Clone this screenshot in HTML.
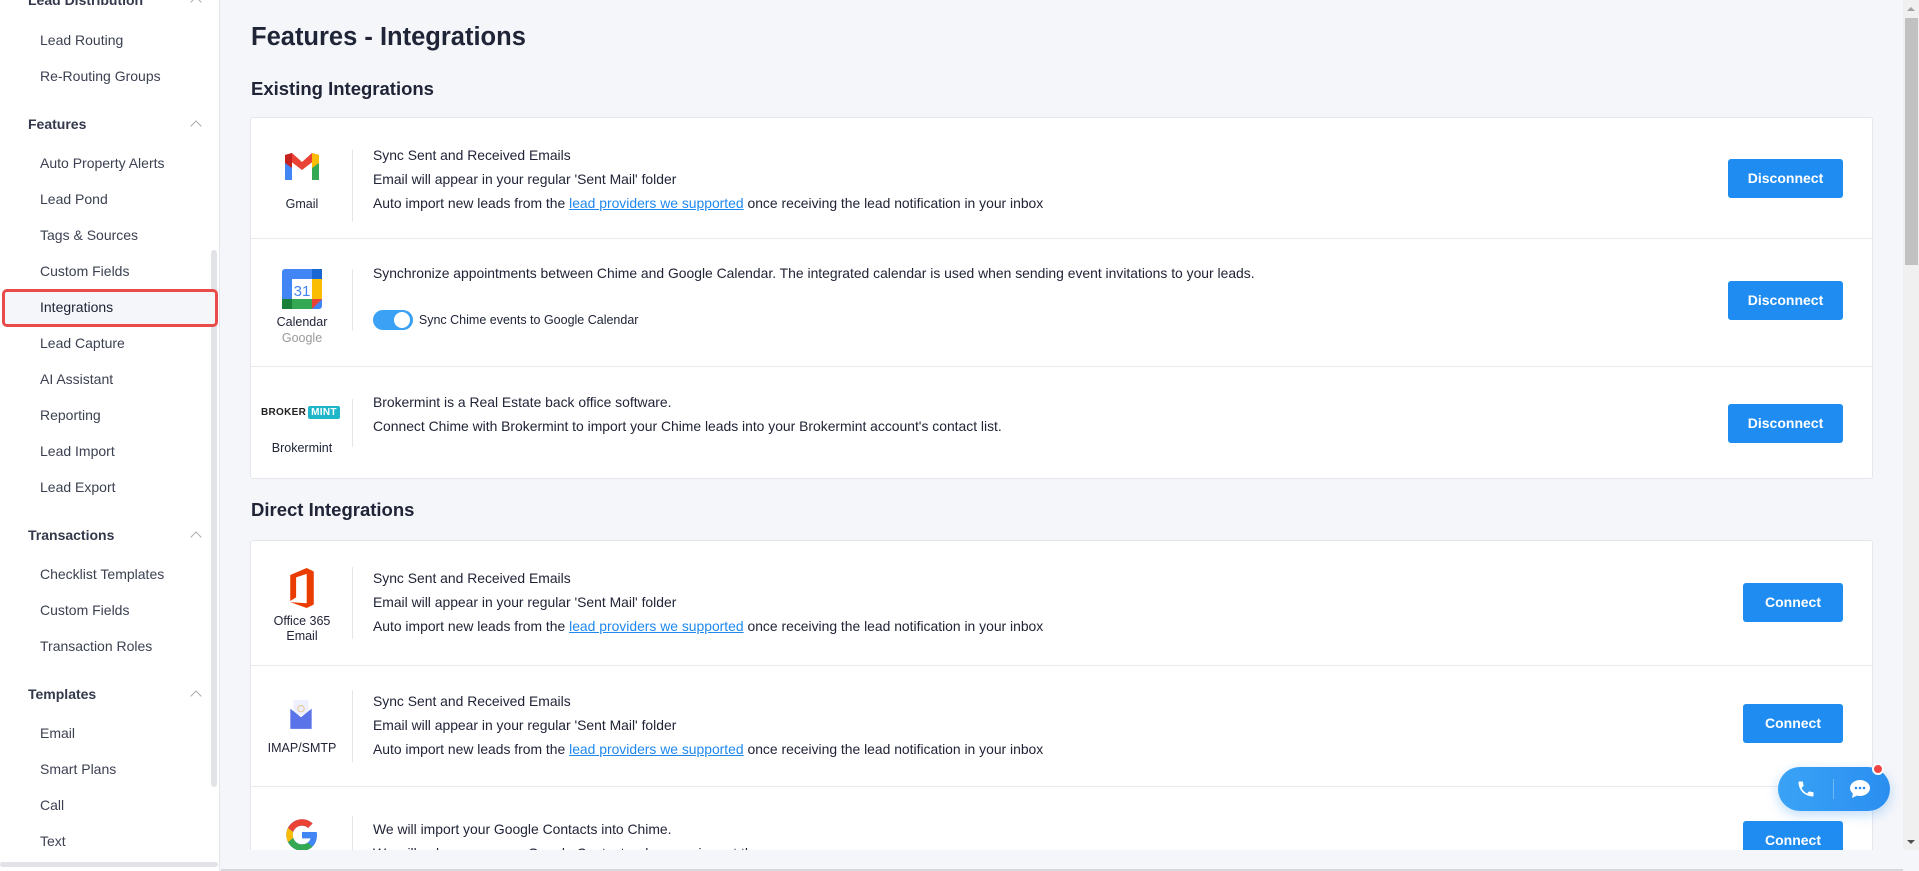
<!DOCTYPE html>
<html><head><meta charset="utf-8"><style>
*{margin:0;padding:0;box-sizing:border-box}
body{width:1919px;height:871px;overflow:hidden;background:#f5f6fa;font-family:"Liberation Sans",sans-serif;position:relative;color:#202437}
.sb{position:absolute;left:0;top:0;width:220px;height:871px;background:#fff;border-right:1px solid #e4e6ec}
.sb .h{position:absolute;left:28px;font-size:14px;font-weight:bold;color:#33384a}
.sb .h:after{content:"";position:absolute;left:164px;top:6px;width:7px;height:7px;border-left:1px solid #aaa;border-top:1px solid #aaa;transform:rotate(45deg)}
.sb .i{position:absolute;left:40px;font-size:14px;color:#3c4152;z-index:3}
.sel{position:absolute;left:2px;top:289px;width:216px;height:38px;border:3px solid #e94b4b;border-radius:5px;background:#f5f6fa;z-index:2}
.abs{position:absolute}
.title{left:251px;top:23px;font-size:25.5px;font-weight:bold}
.sec{left:251px;font-size:18.5px;font-weight:bold}
.card{position:absolute;left:250px;width:1623px;background:#fff;border:1px solid #e4e6ec;border-radius:3px;overflow:hidden}
.row{position:absolute;left:0;width:100%;border-bottom:1px solid #e8eaef}
.ic{position:absolute;left:0;width:102px;text-align:center;font-size:12.5px;color:#202437}
.dv{position:absolute;left:101px;width:1px;background:#e4e6ec}
.tx{position:absolute;left:122px;font-size:13.9px;color:#202437;line-height:24px}
.tx a{color:#1e88f0;text-decoration:underline}
.btn{position:absolute;background:#1f8cf2;color:#fff;font-size:14px;font-weight:bold;border-radius:3px;text-align:center;line-height:39px;height:39px}
</style></head><body>
<div class="sb">
<div class="h" style="top:-8px">Lead Distribution</div>
<div class="i" style="top:32px">Lead Routing</div>
<div class="i" style="top:68px">Re-Routing Groups</div>
<div class="h" style="top:116px">Features</div>
<div class="i" style="top:155px">Auto Property Alerts</div>
<div class="i" style="top:191px">Lead Pond</div>
<div class="i" style="top:227px">Tags &amp; Sources</div>
<div class="i" style="top:263px">Custom Fields</div>
<div class="sel"></div>
<div class="i" style="top:299px;color:#202437">Integrations</div>
<div class="i" style="top:335px">Lead Capture</div>
<div class="i" style="top:371px">AI Assistant</div>
<div class="i" style="top:407px">Reporting</div>
<div class="i" style="top:443px">Lead Import</div>
<div class="i" style="top:479px">Lead Export</div>
<div class="h" style="top:527px">Transactions</div>
<div class="i" style="top:566px">Checklist Templates</div>
<div class="i" style="top:602px">Custom Fields</div>
<div class="i" style="top:638px">Transaction Roles</div>
<div class="h" style="top:686px">Templates</div>
<div class="i" style="top:725px">Email</div>
<div class="i" style="top:761px">Smart Plans</div>
<div class="i" style="top:797px">Call</div>
<div class="i" style="top:833px">Text</div>
<div class="abs" style="left:211px;top:250px;width:6px;height:537px;background:#e2e3e6;border-radius:3px"></div>
<div class="abs" style="left:0;top:862px;width:218px;height:5px;background:#e2e3e6;border-radius:3px"></div>
</div>

<div class="abs title">Features - Integrations</div>
<div class="abs sec" style="top:78px">Existing Integrations</div>

<div class="card" style="top:117px;height:362px">
 <div class="row" style="top:0;height:121px">
  <svg class="abs" style="left:32px;top:35px" width="38" height="28" viewBox="0 0 38 28"><path d="M2 4 L2 27 L9 27 L9 11Z" fill="#4285f4"/><path d="M36 4 L36 27 L29 27 L29 11Z" fill="#34a853"/><path d="M2 4 L19 17 L36 4 L36 2 L29 0 L19 9 L9 0 L2 2Z" fill="#ea4335"/><path d="M29 0 L36 2 L36 10 L29 15Z" fill="#fbbc04"/><path d="M2 2 L9 0 L9 15 L2 10Z" fill="#c5221f"/></svg>
  <div class="ic" style="top:79px">Gmail</div>
  <div class="dv" style="top:32px;height:72px"></div>
  <div class="tx" style="top:25px">Sync Sent and Received Emails<br>Email will appear in your regular 'Sent Mail' folder<br>Auto import new leads from the <a>lead providers we supported</a> once receiving the lead notification in your inbox</div>
  <div class="btn" style="left:1477px;top:41px;width:115px">Disconnect</div>
 </div>
 <div class="row" style="top:121px;height:128px">
  <svg class="abs" style="left:31px;top:30px" width="40" height="40" viewBox="0 0 40 40"><rect x="0" y="0" width="40" height="40" rx="3" fill="#4285f4"/><rect x="30" y="10" width="10" height="20" fill="#fbbc04"/><rect x="0" y="30" width="10" height="10" fill="#188038"/><rect x="10" y="30" width="20" height="10" fill="#34a853"/><path d="M30 30 L40 30 L30 40Z" fill="#ea4335"/><rect x="30" y="0" width="10" height="10" fill="#1967d2"/><rect x="10" y="10" width="20" height="20" fill="#fff"/><text x="20" y="27" font-size="15" font-family="Liberation Sans" fill="#4285f4" text-anchor="middle">31</text></svg>
  <div class="ic" style="top:75px;line-height:16px">Calendar<br><span style="color:#999">Google</span></div>
  <div class="dv" style="top:30px;height:62px"></div>
  <div class="tx" style="top:22px">Synchronize appointments between Chime and Google Calendar. The integrated calendar is used when sending event invitations to your leads.</div>
  <div class="abs" style="left:122px;top:71px;width:40px;height:20px;border-radius:10px;background:#3ba1f5"><div class="abs" style="left:21px;top:2px;width:16px;height:16px;border-radius:50%;background:#fff"></div></div>
  <div class="tx" style="left:154px;top:69px;font-size:12.5px">&nbsp;&nbsp;&nbsp;&nbsp;Sync Chime events to Google Calendar</div>
  <div class="btn" style="left:1477px;top:42px;width:115px">Disconnect</div>
 </div>
 <div class="row" style="top:249px;height:113px;border:none">
  <div class="abs" style="left:10px;top:40px;font-size:10px;font-weight:bold;letter-spacing:.3px;color:#222">BROKER<span style="background:#1eb6c8;color:#fff;padding:1px 3px;border-radius:2px;margin-left:2px">MINT</span></div>
  <div class="ic" style="top:74px">Brokermint</div>
  <div class="dv" style="top:32px;height:48px"></div>
  <div class="tx" style="top:23px">Brokermint is a Real Estate back office software.<br>Connect Chime with Brokermint to import your Chime leads into your Brokermint account's contact list.</div>
  <div class="btn" style="left:1477px;top:37px;width:115px">Disconnect</div>
 </div>
</div>

<div class="abs sec" style="top:499px">Direct Integrations</div>

<div class="card" style="top:540px;height:320px;border-bottom:none">
 <div class="row" style="top:0;height:125px">
  <svg class="abs" style="left:36px;top:27px" width="30" height="40" viewBox="0 0 20 34"><path d="M0 6 L14 0 L20 3 L20 31 L14 34 L0 29 L14 30 L14 5 L5 8 L5 25 L0 28Z" fill="#eb3c00"/></svg>
  <div class="ic" style="top:73px;line-height:15px">Office 365<br>Email</div>
  <div class="dv" style="top:26px;height:72px"></div>
  <div class="tx" style="top:25px">Sync Sent and Received Emails<br>Email will appear in your regular 'Sent Mail' folder<br>Auto import new leads from the <a>lead providers we supported</a> once receiving the lead notification in your inbox</div>
  <div class="btn" style="left:1492px;top:42px;width:100px">Connect</div>
 </div>
 <div class="row" style="top:125px;height:121px">
  <svg class="abs" style="left:36px;top:32px" width="28" height="32" viewBox="0 0 20 30"><rect x="3" y="2" width="14" height="14" fill="#eef0ff"/><path d="M0 10 L10 18 L20 10 L20 29 L0 29Z" fill="#5b73e8"/><circle cx="10" cy="10" r="3" fill="none" stroke="#e8c89a"/></svg>
  <div class="ic" style="top:75px">IMAP/SMTP</div>
  <div class="dv" style="top:24px;height:72px"></div>
  <div class="tx" style="top:23px">Sync Sent and Received Emails<br>Email will appear in your regular 'Sent Mail' folder<br>Auto import new leads from the <a>lead providers we supported</a> once receiving the lead notification in your inbox</div>
  <div class="btn" style="left:1492px;top:38px;width:100px">Connect</div>
 </div>
 <div class="row" style="top:246px;height:100px;border:none">
  <svg class="abs" style="left:33px;top:30px" width="36" height="36" viewBox="0 0 48 48"><path d="M43.6 20H24v8.5h11.3C34 33.5 29.6 36.5 24 36.5c-6.9 0-12.5-5.6-12.5-12.5S17.1 11.5 24 11.5c3.1 0 6 1.2 8.1 3.1l6-6C34.6 5.3 29.6 3 24 3 12.4 3 3 12.4 3 24s9.4 21 21 21c10.5 0 20-7.6 20-21 0-1.3-.2-2.7-.4-4z" fill="#4285f4"/><path d="M5.3 14.7l7 5.1C14.1 15 18.7 11.5 24 11.5c3.1 0 6 1.2 8.1 3.1l6-6C34.6 5.3 29.6 3 24 3 15.9 3 9 7.6 5.3 14.7z" fill="#ea4335"/><path d="M24 45c5.4 0 10.3-2 14-5.4l-6.5-5.4c-2 1.4-4.6 2.3-7.5 2.3-5.5 0-10.1-3.7-11.7-8.7l-7 5.4C8.9 40.3 15.9 45 24 45z" fill="#34a853"/><path d="M5.3 14.7C3.8 17.5 3 20.7 3 24s.8 6.5 2.3 9.3l7-5.4c-.4-1.2-.6-2.5-.6-3.9s.2-2.7.6-3.9z" fill="#fbbc05"/></svg>
  <div class="dv" style="top:29px;height:80px"></div>
  <div class="tx" style="top:30px">We will import your Google Contacts into Chime.<br>We will only access your Google Contacts when you import them.</div>
  <div class="btn" style="left:1492px;top:34px;width:100px">Connect</div>
 </div>
</div>
<div class="abs" style="left:221px;top:850px;width:1682px;height:21px;background:#f5f6fa;border-bottom:2px solid #d8d8dc"></div>

<div class="abs" style="left:1778px;top:767px;width:112px;height:44px;border-radius:22px;background:linear-gradient(90deg,#3aa3f6,#2a8ef0);box-shadow:0 4px 12px rgba(42,142,240,.3)">
 <div class="abs" style="left:55px;top:12px;width:1px;height:20px;background:rgba(255,255,255,.3)"></div>
 <svg class="abs" style="left:18px;top:12px" width="20" height="20" viewBox="0 0 24 24"><path d="M6.6 10.8a15 15 0 006.6 6.6l2.2-2.2c.3-.3.7-.4 1-.2 1.1.4 2.3.6 3.6.6.6 0 1 .4 1 1V20c0 .6-.4 1-1 1A17 17 0 013 4c0-.6.4-1 1-1h3.5c.6 0 1 .4 1 1 0 1.3.2 2.5.6 3.6.1.3 0 .7-.2 1z" fill="#fff"/></svg>
 <svg class="abs" style="left:71px;top:12px" width="22" height="20" viewBox="0 0 22 20"><ellipse cx="11" cy="9" rx="10" ry="8" fill="#fff"/><path d="M4 14 L3 19 L9 16Z" fill="#fff"/><circle cx="7" cy="9" r="1.3" fill="#2a8ef0"/><circle cx="11" cy="9" r="1.3" fill="#2a8ef0"/><circle cx="15" cy="9" r="1.3" fill="#2a8ef0"/></svg>
 <div class="abs" style="left:94px;top:-4px;width:12px;height:12px;border-radius:50%;background:#f04444;border:2px solid #fff"></div>
</div>

<div class="abs" style="left:1903px;top:0;width:16px;height:850px;background:#f0f0f0"></div>
<div class="abs" style="left:1905px;top:18px;width:13px;height:247px;background:#c1c1c1"></div>
<div class="abs" style="left:1907px;top:7px;width:0;height:0;border-left:4px solid transparent;border-right:4px solid transparent;border-bottom:4px solid #a3a3a3"></div>
<div class="abs" style="left:1907px;top:840px;width:0;height:0;border-left:4px solid transparent;border-right:4px solid transparent;border-top:4px solid #505050"></div>
</body></html>
